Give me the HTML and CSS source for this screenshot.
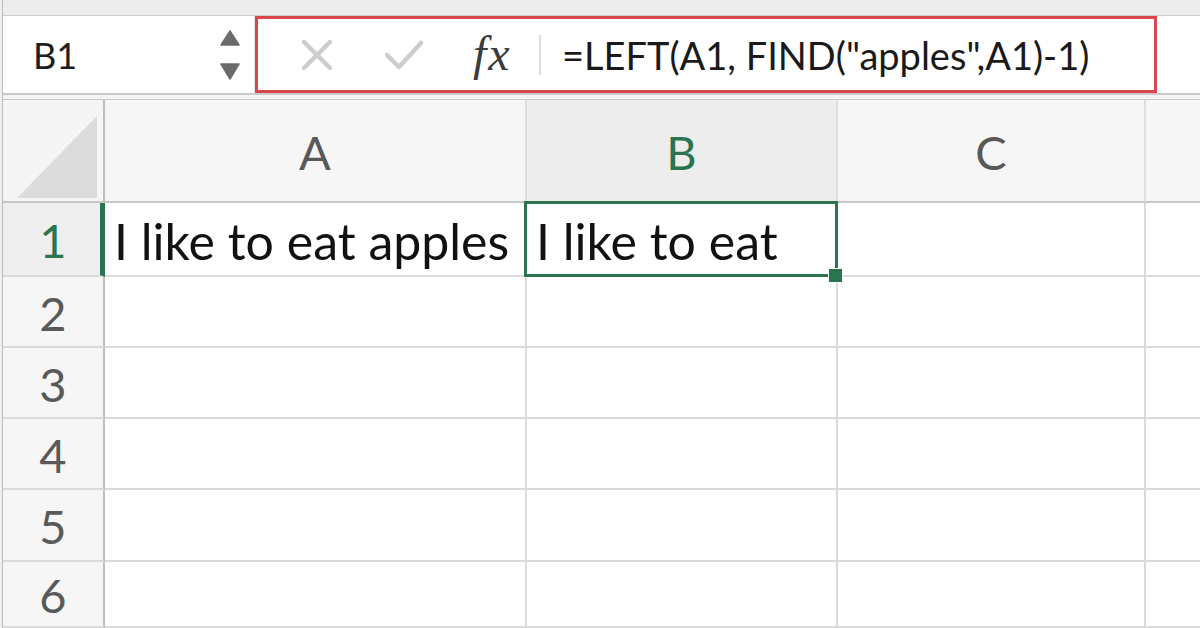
FILE: index.html
```html
<!DOCTYPE html>
<html>
<head>
<meta charset="utf-8">
<link rel="stylesheet" href="styles.css">
</head>
<body>
<div class="app">
  <div class="titlebar"></div>
  <div class="formula-row">
    <div class="namebox">
      <span class="ref">B1</span>
      <svg class="spin" width="20" height="50" viewBox="0 0 20 50">
        <path d="M10 1 L19 15 L1 15 Z" fill="#6b6b6b" stroke="#6b6b6b" stroke-width="1.5" stroke-linejoin="round"/>
        <path d="M1 34 L19 34 L10 49 Z" fill="#6b6b6b" stroke="#6b6b6b" stroke-width="1.5" stroke-linejoin="round"/>
      </svg>
    </div>
    <div class="fbox">
      <svg class="ico ico-x" width="30" height="30" viewBox="0 0 30 30">
        <path d="M2 2 L28 28 M28 2 L2 28" stroke="#cdcdcd" stroke-width="4.5" stroke-linecap="round" fill="none"/>
      </svg>
      <svg class="ico ico-check" width="38" height="30" viewBox="0 0 38 30">
        <path d="M2 15 L14 27 L36 3" stroke="#cdcdcd" stroke-width="4.5" stroke-linecap="round" stroke-linejoin="round" fill="none"/>
      </svg>
      <span class="fx">fx</span>
      <span class="divider"></span>
      <span class="formula">=LEFT(A1, FIND("apples",A1)-1)</span>
    </div>
    <div class="rest"></div>
  </div>
  <div class="sep"></div>
  <div class="grid">
    <div class="corner">
      <svg width="80" height="82" viewBox="0 0 80 82"><path d="M80 0 L80 82 L0 82 Z" fill="#dcdcdc"/></svg>
    </div>
    <div class="colh">A</div>
    <div class="colh colh-sel">B</div>
    <div class="colh">C</div>
    <div class="colh colh-last"></div>

    <div class="rowh rowh-sel">1</div>
    <div class="cell"><span class="txt">I like to eat apples</span></div>
    <div class="cell cell-active"><span class="txt">I like to eat</span><span class="handle"></span></div>
    <div class="cell"></div>
    <div class="cell cell-last"></div>

    <div class="rowh">2</div>
    <div class="cell"></div>
    <div class="cell"></div>
    <div class="cell"></div>
    <div class="cell cell-last"></div>

    <div class="rowh">3</div>
    <div class="cell"></div>
    <div class="cell"></div>
    <div class="cell"></div>
    <div class="cell cell-last"></div>

    <div class="rowh">4</div>
    <div class="cell"></div>
    <div class="cell"></div>
    <div class="cell"></div>
    <div class="cell cell-last"></div>

    <div class="rowh">5</div>
    <div class="cell"></div>
    <div class="cell"></div>
    <div class="cell"></div>
    <div class="cell cell-last"></div>

    <div class="rowh">6</div>
    <div class="cell"></div>
    <div class="cell"></div>
    <div class="cell"></div>
    <div class="cell cell-last"></div>
  </div>
</div>
</body>
</html>
```

FILE: styles.css
```css
* { box-sizing: border-box; }

html, body {
  margin: 0;
  padding: 0;
}

body {
  width: 1200px;
  height: 628px;
  overflow: hidden;
  background: #efefef;
  font-family: "Lato", "Open Sans", sans-serif;
}

.app {
  margin-left: 2px;
  border-left: 1px solid #bcbcbc;
  height: 628px;
  display: flex;
  flex-direction: column;
  background: #ffffff;
}

.titlebar {
  height: 16px;
  background: #ededed;
  border-bottom: 1px solid #cdcdcd;
  flex: none;
}

.formula-row {
  height: 77px;
  flex: none;
  display: flex;
  background: #ffffff;
}

.namebox {
  width: 252px;
  display: flex;
  align-items: center;
  padding-left: 30px;
  padding-right: 14px;
  border-right: 1px solid #e4e4e4;
}

.ref {
  font-size: 36px;
  color: #1e1e1e;
  line-height: 1;
}

.spin {
  margin-left: auto;
  margin-top: 1px;
}

.fbox {
  width: 902px;
  border: 3px solid #d9464c;
  display: flex;
  align-items: center;
}

.ico { flex: none; }
.ico-x { margin-left: 44px; margin-top: 1px; }
.ico-check { margin-left: 53px; margin-top: 1px; }

.fx {
  font-family: "Liberation Serif", "DejaVu Serif", serif;
  font-style: italic;
  font-size: 48px;
  color: #3c3c3c;
  margin-left: 50px;
  width: 43px;
  flex: none;
  line-height: 1;
  letter-spacing: 2px;
  margin-top: -2px;
}

.divider {
  width: 2px;
  height: 40px;
  background: #dddddd;
  margin-left: 23px;
  flex: none;
}

.formula {
  margin-left: 21px;
  font-size: 38px;
  color: #1a1a1a;
  line-height: 1;
  white-space: nowrap;
}

.rest {
  flex: 1;
  background: #ffffff;
}

.sep {
  height: 7px;
  flex: none;
  border-top: 2px solid #cacaca;
  border-bottom: 1px solid #c9c9c9;
  background: #f4f4f4;
}

.grid {
  flex: 1;
  display: grid;
  grid-template-columns: 102px 422px 311px 308px 1fr;
  grid-template-rows: 103px 74px 71px 71px 71px 72px 1fr;
  overflow: hidden;
}

.corner {
  background: #f5f5f5;
  border-right: 2px solid #bdbdbd;
  border-bottom: 2px solid #c6c6c6;
  display: flex;
  justify-content: flex-end;
  align-items: flex-end;
  padding-right: 6px;
  padding-bottom: 3px;
}

.colh {
  background: #f6f6f6;
  border-right: 2px solid #dedede;
  border-bottom: 2px solid #c6c6c6;
  display: flex;
  align-items: center;
  justify-content: center;
  font-size: 47px;
  color: #595959;
  padding-top: 2px;
}

.colh-sel {
  background: #ededed;
  color: #2a7550;
}

.colh-last {
  border-right: none;
}

.rowh {
  background: #f6f6f6;
  border-right: 2px solid #bdbdbd;
  border-bottom: 2px solid #dadada;
  display: flex;
  align-items: center;
  justify-content: center;
  font-size: 47px;
  color: #595959;
  padding-top: 2px;
}

.rowh-sel {
  background: #eeeeee;
  color: #2a7550;
  border-right: 5px solid #2a7550;
  padding-left: 3px;
}

.cell {
  position: relative;
  border-right: 2px solid #dadada;
  border-bottom: 2px solid #dadada;
  display: flex;
  align-items: center;
  padding-left: 9px;
  padding-top: 4px;
}

.cell-last { border-right: none; }

.txt {
  font-size: 50px;
  color: #111111;
  white-space: nowrap;
  line-height: 1;
}

.cell-active::after {
  content: "";
  position: absolute;
  left: -3px;
  top: -2px;
  right: -2px;
  bottom: -2px;
  border: 3px solid #2a7550;
  pointer-events: none;
}

.handle {
  position: absolute;
  right: -7px;
  bottom: -8px;
  width: 15px;
  height: 15px;
  background: #2a7550;
  border: 1px solid #ffffff;
  z-index: 2;
}
```
